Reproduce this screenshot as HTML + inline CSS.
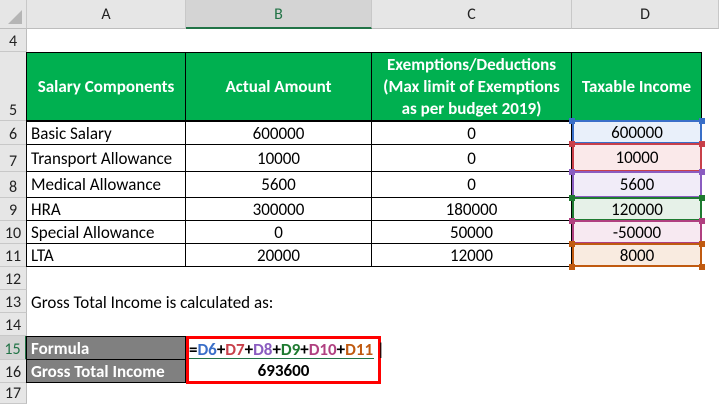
<!DOCTYPE html><html><head><style>
body{margin:0;width:719px;height:404px;overflow:hidden;background:#fff;font-family:Calibri,Carlito,"Liberation Sans",sans-serif;font-size:17px;position:relative}
div{position:absolute;box-sizing:border-box}
.ch{top:0;height:29px;background:#e6e6e6;border-right:1px solid #c8c8c8;border-bottom:1px solid #bdbdbd;text-align:center;line-height:30px;color:#222;font-size:16px}
.rh{left:0;width:27px;background:#e6e6e6;border-bottom:1px solid #c8c8c8;border-right:1px solid #bdbdbd;text-align:center;color:#222;display:flex;align-items:flex-end;justify-content:center;padding-bottom:0px;font-size:16px}
.c{border:1px solid #000;display:flex;align-items:center;justify-content:center;margin:-1px 0 0 -1px;white-space:nowrap}
.g{background:#00b050;color:#fff;font-weight:bold;text-align:center;line-height:22px}
.l{justify-content:flex-start;padding-left:4px}
.h{width:6px;height:6px}
</style></head><body>
<div class="ch" style="left:0;width:27px"><svg width="27" height="29"><polygon points="22,10 22,24 8,24" fill="#b5b5b5"/></svg></div>
<div class="ch" style="left:27px;width:159px">A</div>
<div class="ch" style="left:186px;width:186px;background:#d4d4d4;border-bottom:2px solid #217346;color:#217346">B</div>
<div class="ch" style="left:372px;width:200px">C</div>
<div class="ch" style="left:572px;width:147px">D</div>
<div class="rh" style="top:29px;height:23px">4</div>
<div class="rh" style="top:52px;height:69px">5</div>
<div class="rh" style="top:121px;height:24px">6</div>
<div class="rh" style="top:145px;height:27px">7</div>
<div class="rh" style="top:172px;height:26px">8</div>
<div class="rh" style="top:198px;height:23px">9</div>
<div class="rh" style="top:221px;height:23px">10</div>
<div class="rh" style="top:244px;height:23px">11</div>
<div class="rh" style="top:267px;height:23px">12</div>
<div class="rh" style="top:290px;height:23px">13</div>
<div class="rh" style="top:313px;height:23px">14</div>
<div class="rh" style="top:336px;height:24px;background:#d4d4d4;color:#217346;border-right:2px solid #217346">15</div>
<div class="rh" style="top:360px;height:23px">16</div>
<div class="rh" style="top:383px;height:21px">17</div>

<div class="c g" style="left:27px;top:53px;width:160px;height:69px">Salary Components</div>
<div class="c g" style="left:186px;top:53px;width:187px;height:69px">Actual Amount</div>
<div class="c g" style="left:372px;top:53px;width:201px;height:69px">Exemptions/Deductions<br>(Max limit of Exemptions<br>as per budget 2019)</div>
<div class="c g" style="left:572px;top:53px;width:131px;height:69px">Taxable Income</div>

<div class="c l" style="left:27px;top:122px;width:160px;height:24px">Basic Salary</div>
<div class="c" style="left:186px;top:122px;width:187px;height:24px">600000</div>
<div class="c" style="left:372px;top:122px;width:201px;height:24px">0</div>
<div class="c l" style="left:27px;top:145px;width:160px;height:28px">Transport Allowance</div>
<div class="c" style="left:186px;top:145px;width:187px;height:28px">10000</div>
<div class="c" style="left:372px;top:145px;width:201px;height:28px">0</div>
<div class="c l" style="left:27px;top:172px;width:160px;height:27px">Medical Allowance</div>
<div class="c" style="left:186px;top:172px;width:187px;height:27px">5600</div>
<div class="c" style="left:372px;top:172px;width:201px;height:27px">0</div>
<div class="c l" style="left:27px;top:198px;width:160px;height:24px">HRA</div>
<div class="c" style="left:186px;top:198px;width:187px;height:24px">300000</div>
<div class="c" style="left:372px;top:198px;width:201px;height:24px">180000</div>
<div class="c l" style="left:27px;top:221px;width:160px;height:24px">Special Allowance</div>
<div class="c" style="left:186px;top:221px;width:187px;height:24px">0</div>
<div class="c" style="left:372px;top:221px;width:201px;height:24px">50000</div>
<div class="c l" style="left:27px;top:244px;width:160px;height:24px">LTA</div>
<div class="c" style="left:186px;top:244px;width:187px;height:24px">20000</div>
<div class="c" style="left:372px;top:244px;width:201px;height:24px">12000</div>

<div class="c" style="left:573px;top:121px;width:130px;height:24px;border:2px solid #3a6fc8;background:#e9f0fa">600000</div>
<div class="c" style="left:573px;top:144px;width:130px;height:29px;border:2px solid #c8404a;background:#fae9ea">10000</div>
<div class="c" style="left:573px;top:172px;width:130px;height:27px;border:2px solid #8a5cc0;background:#f1ecf8">5600</div>
<div class="c" style="left:573px;top:198px;width:130px;height:24px;border:2px solid #1e7a30;background:#e6f1e8">120000</div>
<div class="c" style="left:573px;top:221px;width:130px;height:24px;border:2px solid #b04080;background:#f7e9f1">-50000</div>
<div class="c" style="left:573px;top:244px;width:130px;height:24px;border:2px solid #c05a10;background:#f9ebe0">8000</div>
<div class="h" style="left:569px;top:118px;background:#3a6fc8"></div><div class="h" style="left:699px;top:118px;background:#3a6fc8"></div>
<div class="h" style="left:569px;top:141px;background:#c8404a"></div><div class="h" style="left:699px;top:141px;background:#c8404a"></div>
<div class="h" style="left:569px;top:169px;background:#8a5cc0"></div><div class="h" style="left:699px;top:169px;background:#8a5cc0"></div>
<div class="h" style="left:569px;top:195px;background:#1e7a30"></div><div class="h" style="left:699px;top:195px;background:#1e7a30"></div>
<div class="h" style="left:569px;top:218px;background:#b04080"></div><div class="h" style="left:699px;top:218px;background:#b04080"></div>
<div class="h" style="left:569px;top:241px;background:#c05a10"></div><div class="h" style="left:699px;top:241px;background:#c05a10"></div>
<div class="h" style="left:569px;top:264px;background:#c05a10"></div><div class="h" style="left:699px;top:264px;background:#c05a10"></div>

<div style="left:31px;top:290px;height:23px;line-height:25px;white-space:nowrap">Gross Total Income is calculated as:</div>
<div class="c l" style="left:27px;top:337px;width:160px;height:24px;background:#808080;color:#fff;font-weight:bold">Formula</div>
<div class="c l" style="left:27px;top:360px;width:160px;height:24px;background:#808080;color:#fff;font-weight:bold">Gross Total Income</div>
<div style="left:186px;top:336px;width:195px;height:48px;border:3px solid #f00"></div>
<div style="left:189px;top:339px;width:185px;height:20px;border-bottom:1.5px solid #217346;line-height:21px;font-weight:bold;white-space:nowrap">=<span style="color:#3a6fc8">D6</span>+<span style="color:#c8404a">D7</span>+<span style="color:#8a5cc0">D8</span>+<span style="color:#1e7a30">D9</span>+<span style="color:#b04080">D10</span>+<span style="color:#c05a10">D11</span><span style="font-weight:normal"> |</span></div>
<div style="left:189px;top:360px;width:189px;height:21px;text-align:center;line-height:22px;font-weight:bold">693600</div>
</body></html>
